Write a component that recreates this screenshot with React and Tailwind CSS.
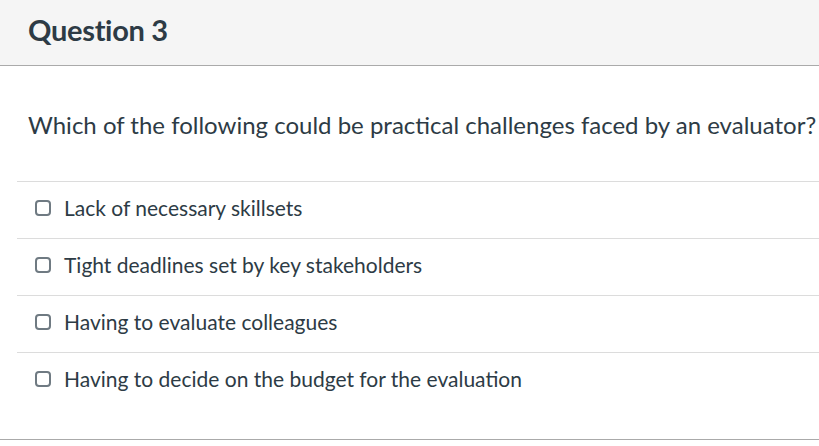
const answers = [
  "Lack of necessary skillsets",
  "Tight deadlines set by key stakeholders",
  "Having to evaluate colleagues",
  "Having to decide on the budget for the evaluation",
];

function Answer({ text }) {
  return (
    <div className="flex items-center h-[57px] border-t border-[#dcdcdc] pl-[18px] pb-[5px]">
      <span className="w-[16px] h-[16px] border-2 border-[#6f7a82] rounded-[4px] bg-white shrink-0" />
      <span className="ml-[13px] text-[21px] text-[#2d3b45] leading-[28px]">{text}</span>
    </div>
  );
}

export default function App() {
  return (
    <div
      className="w-[819px] h-[446px] bg-white overflow-hidden"
      style={{ fontFamily: "Lato, 'Open Sans', sans-serif" }}
    >
      <div className="h-[66px] bg-[#f5f5f5] border-b border-[#aaaaaa] flex items-center pl-[28px] pb-[6px]">
        <h2 className="text-[29px] font-bold text-[#2d3b45] tracking-[-0.3px] leading-[36px]">
          Question 3
        </h2>
      </div>
      <div className="pl-[28px] pt-[42px] pb-[39px]">
        <p className="text-[24px] text-[#2d3b45] whitespace-nowrap leading-[34px]">
          Which of the following could be practical challenges faced by an evaluator?
        </p>
      </div>
      <div className="ml-[17px] h-[258px]">
        {answers.map((a) => (
          <Answer key={a} text={a} />
        ))}
      </div>
      <div className="border-t border-[#aaaaaa]" />
    </div>
  );
}
